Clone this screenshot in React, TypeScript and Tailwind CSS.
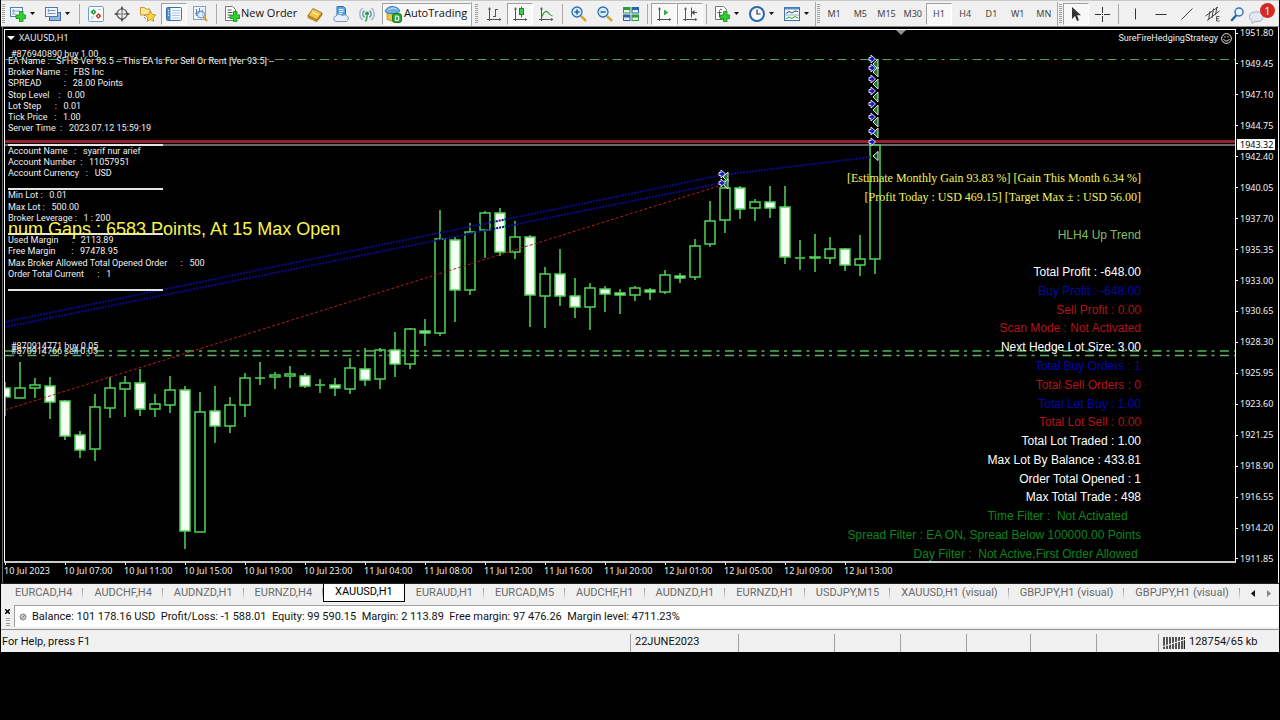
import { useState, type ReactNode } from "react";
import clsx from "clsx";

const TOOLBAR_FONT = "font-['Open_Sans','Noto_Sans',sans-serif]";
const PANEL_FONT = "font-['Roboto','Noto_Sans',sans-serif]";
const AXIS_FONT = "font-['Noto_Sans','Open_Sans',sans-serif]";

// high, body top, body bottom, low (chart px), filled
type Candle = [number, number, number, number, boolean];

const CANDLES: Candle[] = [
    [382, 388, 397, 416, true],
    [362, 388, 398, 398, false],
    [378, 385, 388, 398, false],
    [377, 386, 402, 419, true],
    [400, 401, 436, 440, true],
    [431, 435, 450, 458, true],
    [394, 407, 449, 461, false],
    [377, 388, 408, 418, false],
    [376, 383, 389, 417, false],
    [369, 383, 409, 416, true],
    [394, 404, 409, 417, false],
    [376, 390, 405, 413, false],
    [386, 390, 531, 549, true],
    [392, 412, 532, 532, false],
    [386, 411, 426, 443, true],
    [397, 405, 426, 433, false],
    [373, 378, 405, 417, false],
    [362, 378, 378, 385, false],
    [372, 375, 377, 389, false],
    [366, 374, 376, 388, false],
    [373, 376, 386, 388, true],
    [379, 385, 385, 393, false],
    [378, 385, 388, 396, true],
    [358, 368, 389, 394, false],
    [348, 369, 380, 386, true],
    [348, 350, 379, 389, false],
    [332, 350, 364, 377, true],
    [328, 329, 364, 369, false],
    [319, 331, 333, 346, true],
    [210, 239, 333, 336, false],
    [237, 240, 290, 322, true],
    [223, 232, 290, 295, false],
    [211, 213, 230, 258, false],
    [208, 213, 252, 256, true],
    [221, 237, 252, 259, false],
    [235, 237, 295, 327, true],
    [267, 274, 296, 328, false],
    [249, 274, 296, 306, true],
    [278, 296, 307, 318, true],
    [283, 288, 307, 330, false],
    [286, 289, 294, 312, true],
    [289, 293, 295, 314, true],
    [286, 288, 295, 301, false],
    [288, 290, 292, 300, true],
    [270, 275, 292, 294, false],
    [273, 276, 278, 283, true],
    [239, 246, 277, 280, false],
    [201, 221, 244, 247, false],
    [180, 188, 220, 233, false],
    [186, 188, 209, 219, true],
    [199, 202, 208, 221, false],
    [186, 202, 208, 218, true],
    [186, 207, 257, 264, true],
    [240, 258, 258, 270, false],
    [234, 257, 258, 272, true],
    [237, 249, 258, 264, false],
    [248, 249, 265, 271, true],
    [235, 259, 265, 276, false],
    [145, 145, 259, 274, false],
];

const ENTRIES = [
    [867, 59], [867, 68], [867, 79], [867, 91], [867, 104], [867, 117], [867, 131], [867, 142],
    [717, 174], [717, 183],
];
const EXITS = [
    [872, 64], [872, 72], [872, 84], [872, 97], [872, 110], [872, 122], [872, 133],
    [722, 177], [722, 184],
];

const PRICES = [
    "1951.80", "1949.45", "1947.10", "1944.75", "1942.40", "1940.05", "1937.70", "1935.35", "1933.00",
    "1930.65", "1928.30", "1925.95", "1923.60", "1921.25", "1918.90", "1916.55", "1914.20", "1911.85",
];

const TIMES = [
    "10 Jul 2023", "10 Jul 07:00", "10 Jul 11:00", "10 Jul 15:00", "10 Jul 19:00", "10 Jul 23:00",
    "11 Jul 04:00", "11 Jul 08:00", "11 Jul 12:00", "11 Jul 16:00", "11 Jul 20:00",
    "12 Jul 01:00", "12 Jul 05:00", "12 Jul 09:00", "12 Jul 13:00",
];

// null draws a divider
const ACCOUNT_INFO: (string | null)[] = [
    "EA Name :   SFHS Ver 93.5 -- This EA Is For Sell Or Rent [Ver 93.5] --",
    "Broker Name  :   FBS Inc",
    "SPREAD          :   28.00 Points",
    "Stop Level    :   0.00",
    "Lot Step      :   0.01",
    "Tick Price   :   1.00",
    "Server Time  :   2023.07.12 15:59:19",
    null,
    "Account Name   :   syarif nur arief",
    "Account Number  :   11057951",
    "Account Currency   :   USD",
    null,
    "Min Lot :   0.01",
    "Max Lot :   500.00",
    "Broker Leverage :   1 : 200",
    null,
    "Used Margin      :   2113.89",
    "Free Margin       :   97478.95",
    "Max Broker Allowed Total Opened Order      :   500",
    "Order Total Current      :   1",
    null,
];

const SERIF = "font-['Liberation_Serif',serif] text-[#f4f45c]";

const STRATEGY_INFO: { text: string; cls: string }[] = [
    { text: "[Estimate Monthly Gain 93.83 %] [Gain This Month 6.34 %]", cls: SERIF },
    { text: "[Profit Today : USD 469.15] [Target Max ± : USD 56.00]", cls: SERIF },
    { text: "", cls: "" },
    { text: "HLH4 Up Trend", cls: "text-[#83bd5e]" },
    { text: "", cls: "" },
    { text: "Total Profit : -648.00", cls: "text-white" },
    { text: "Buy Profit : -648.00", cls: "text-[#0404b4]" },
    { text: "Sell Profit : 0.00", cls: "text-[#b8101c]" },
    { text: "Scan Mode : Not Activated", cls: "text-[#b8101c]" },
    { text: "Next Hedge Lot Size: 3.00", cls: "text-white" },
    { text: "Total Buy Orders : 1", cls: "text-[#0404b4]" },
    { text: "Total Sell Orders : 0", cls: "text-[#b8101c]" },
    { text: "Total Lot Buy : 1.00", cls: "text-[#0404b4]" },
    { text: "Total Lot Sell : 0.00", cls: "text-[#b8101c]" },
    { text: "Total Lot Traded : 1.00", cls: "text-white" },
    { text: "Max Lot By Balance : 433.81", cls: "text-white" },
    { text: "Order Total Opened : 1", cls: "text-white" },
    { text: "Max Total Trade : 498", cls: "text-white" },
    { text: "Time Filter :  Not Activated    ", cls: "text-[#0c861a]" },
    { text: "Spread Filter : EA ON, Spread Below 100000.00 Points", cls: "text-[#0c861a]" },
    { text: "Day Filter :  Not Active,First Order Allowed ", cls: "text-[#0c861a]" },
];

const TABS = [
    "EURCAD,H4", "AUDCHF,H4", "AUDNZD,H1", "EURNZD,H4", "XAUUSD,H1", "EURAUD,H1", "EURCAD,M5",
    "AUDCHF,H1", "AUDNZD,H1", "EURNZD,H1", "USDJPY,M15", "XAUUSD,H1 (visual)",
    "GBPJPY,H1 (visual)", "GBPJPY,H1 (visual)",
];

const PERIODS = ["M1", "M5", "M15", "M30", "H1", "H4", "D1", "W1", "MN"];

/* ---------- toolbar icons ---------- */

function Icon({ children }: { children: ReactNode }) {
    return (
        <svg viewBox="0 0 16 16" className="h-4 w-4 shrink-0" fill="none" aria-hidden="true">
            {children}
        </svg>
    );
}

const GreenPlus = () => (
    <path d="M9.500 5.500h3.500v3.500H16v3.500h-3v3.200h-3.500v-3.200H6V9h3.500z" fill="#2fd02f" stroke="#138a17" strokeWidth=".8" />
);

const NewChartIcon = () => (
    <Icon>
        <rect x=".5" y="1.500" width="12" height="9" fill="#eef5fc" stroke="#5580b0" />
        <path d="M2 5h8M2 8h4M3.500 3v4" stroke="#7fa3cc" />
        <GreenPlus />
    </Icon>
);

const ProfilesIcon = () => (
    <Icon>
        <rect x="4.500" y="6.500" width="11" height="8" fill="#8fb4dd" stroke="#3f6ea8" />
        <rect x=".5" y="1.500" width="12" height="9" fill="#eef5fc" stroke="#4a78b0" />
        <path d="M2.500 4.500h8M2.500 7.500h8M3.500 3v3" stroke="#6f98c8" />
    </Icon>
);

const MarketWatchIcon = () => (
    <Icon>
        <rect x=".5" y=".5" width="15" height="15" rx="1" fill="#fbfdff" stroke="#6d9cc9" />
        <path d="m5.500 3 3 3-3 3-3-3z" fill="#1f9a38" />
        <path d="m10.500 7 3 3-3 3-3-3z" fill="#cc3322" />
        <path d="M5.500 5v2M10.500 9v2" stroke="#fff" />
        <path d="M3 11h3M3 13h2M10 3.500h3" stroke="#a9c2dc" />
    </Icon>
);

const NavigatorIcon = () => (
    <Icon>
        <circle cx="8" cy="8" r="5" stroke="#555" strokeWidth="1.200" />
        <path d="M8 .5v15M.5 8h15" stroke="#555" />
        <path d="M8 .5 6.500 3h3zM8 15.500 6.500 13h3zM.5 8 3 6.500v3zM15.500 8 13 6.500v3z" fill="#444" />
        <circle cx="8" cy="8" r="2" fill="#f4f4f4" />
        <path d="M8 6v4M6 8h4" stroke="#777" />
    </Icon>
);

const FavoritesIcon = () => (
    <Icon>
        <path d="M.5 1.500h4l1 1.500H10v6H.5z" fill="#fbe59a" stroke="#c79a2e" />
        <path d="M4.500 9v3.500H7" stroke="#888" strokeDasharray="1 1" />
        <path d="m10.500 5 1.700 3.400 3.600.5-2.600 2.600.6 3.800-3.300-1.800-3.300 1.800.6-3.800-2.600-2.600 3.600-.5z" fill="#ffd43a" stroke="#b9861a" strokeWidth=".8" />
    </Icon>
);

const DataWindowIcon = () => (
    <Icon>
        <rect x=".5" y="1.500" width="15" height="13" rx="1" fill="#f7fbff" stroke="#3d6fa8" />
        <rect x="1" y="2" width="3.500" height="12" fill="#4f8fd0" />
        <path d="M6 4.500h8M6 7h8M6 9.500h8M6 12h8" stroke="#aac6e2" />
        <path d="M2 4.500h1M2 7h1M2 9.500h1" stroke="#fff" />
    </Icon>
);

const TesterIcon = () => (
    <Icon>
        <rect x="1.500" y=".5" width="12" height="13" fill="#eef5fc" stroke="#7ea4cc" />
        <path d="M4.500 3v7M7.500 2v6M10.500 4v6M3 8l4-3 4 2" stroke="#5b86b5" />
        <circle cx="9" cy="8.500" r="3.500" fill="#d9ebfb" fillOpacity=".7" stroke="#6a8fb8" />
        <path d="m11.500 11 3.500 4" stroke="#d9a02c" strokeWidth="2" />
    </Icon>
);

const NewOrderIcon = () => (
    <Icon>
        <path d="M1.500.5h7l3 3v11h-10z" fill="#fff" stroke="#777" />
        <path d="M3.500 4h4M3.500 6.500h5M3.500 9h3M3.500 11.500h2" stroke="#555" />
        <GreenPlus />
    </Icon>
);

const MetaEditorIcon = () => (
    <Icon>
        <path d="M1 9.500 6 2.500l9 4.500-5 7z" fill="#f3c64a" stroke="#a87616" />
        <path d="M1 9.500v2.200l8.800 4L15 9V7l-5 7z" fill="#d79a2a" stroke="#9a6a12" strokeWidth=".7" />
        <path d="m5 6 6 3" stroke="#fbe7a4" strokeWidth="1.500" />
    </Icon>
);

const CloudIcon = () => (
    <Icon>
        <path d="M4 .5h6.500l2 2V10H4z" fill="#58a6e8" stroke="#2b6fb5" />
        <path d="M6 3.500h4.500M6 5.500h4.500M6 7.500h3" stroke="#fff" />
        <path d="M3 15.500a2.800 2.800 0 0 1 0-5.500 3.500 3 0 0 1 6-.5 3.500 3 0 0 1 4.500 6z" fill="#e8eef6" stroke="#8496b0" />
    </Icon>
);

const SignalsIcon = () => (
    <Icon>
        <path d="M3.800 2a7.500 7.500 0 0 0 0 12M12.200 2a7.500 7.500 0 0 1 0 12" stroke="#a8bac8" strokeWidth="1.500" />
        <path d="M5.500 4.500a4.500 4.500 0 0 0 0 7M10.500 4.500a4.500 4.500 0 0 1 0 7" stroke="#5e9aa5" strokeWidth="1.500" />
        <circle cx="8" cy="7.500" r="2" fill="#2c9c55" />
        <path d="M8 9.500c0 3-.5 4.500-1.500 6" stroke="#3fae5e" strokeWidth="1.800" />
    </Icon>
);

const AutoTradingIcon = () => (
    <svg viewBox="0 0 18 18" className="h-[18px] w-[18px] shrink-0" fill="none" aria-hidden="true">
        <path d="M3 8v6.500l6 2V9z" fill="#f1c23e" stroke="#a97f17" strokeWidth=".7" />
        <path d="M15 8v4l-6 4.500V9z" fill="#fadf7c" />
        <path d="M1 6.500C2 3 6 1 9.500 1.500c3 .5 5.500 2 6.500 4.500-3 3-11 4-15 .5z" fill="#6cb0e4" stroke="#2c6ca8" strokeWidth=".8" />
        <path d="M4.500 5c2-2 6-2.500 8-1" stroke="#cfe7f9" />
        <rect x="8.500" y="8.500" width="9" height="9" rx="2.500" fill="#27a835" stroke="#16801f" />
        <path d="M11.500 11v4.500h1.500c2.400 0 2.400-4.500 0-4.500z" stroke="#fff" strokeWidth="1.200" />
    </svg>
);

const Axes = () => (
    <>
        <path d="M3.500 2v13M1 13.500h13.500" stroke="#555" />
        <path d="m3.500 1-1.500 2.500h3zM15.500 13.500 13 12v3z" fill="#555" />
    </>
);

const BarsIcon = () => (
    <Icon>
        <Axes />
        <path d="M9.500 3v8M9.500 3.500H12M7 10.500h2.500" stroke="#555" />
    </Icon>
);

const CandlesIcon = () => (
    <Icon>
        <Axes />
        <path d="M9.500.5v11" stroke="#1a8a24" />
        <rect x="7.500" y="2.500" width="4" height="6" fill="#37d046" stroke="#1a8a24" />
    </Icon>
);

const LineIcon = () => (
    <Icon>
        <Axes />
        <path d="M4 10.500C6 5 8.500 4.500 10 6.500c1.200 1.700 2 3 4.500 3.500" stroke="#2c9a3a" strokeWidth="1.200" />
    </Icon>
);

const ZoomIcon = ({ plus }: { plus?: boolean }) => (
    <Icon>
        <path d="m10 10 5 5" stroke="#d9a632" strokeWidth="2.500" />
        <circle cx="6" cy="6" r="5" fill="#d6ebfb" stroke="#2f6fb8" strokeWidth="1.300" />
        <path d="M3.500 6h5" stroke="#2460a8" strokeWidth="1.500" />
        {plus && <path d="M6 3.500v5" stroke="#2460a8" strokeWidth="1.500" />}
    </Icon>
);

const TilesIcon = () => (
    <Icon>
        <rect x="0" y="1" width="7.500" height="6.500" fill="#2f9c3a" />
        <rect x="8.500" y="1" width="7.500" height="6.500" fill="#2b62b4" />
        <rect x="0" y="8.500" width="7.500" height="6.500" fill="#2b62b4" />
        <rect x="8.500" y="8.500" width="7.500" height="6.500" fill="#2f9c3a" />
        <path d="M1 4h5.500v2.500H1zM9.500 4H15v2.500H9.500zM1 11.500h5.500V14H1zM9.500 11.500H15V14H9.500z" fill="#eaf4ee" />
    </Icon>
);

const AutoScrollIcon = () => (
    <Icon>
        <Axes />
        <path d="m8 3.500 4.500 3L8 9.500z" fill="#34b043" />
    </Icon>
);

const ShiftIcon = () => (
    <Icon>
        <Axes />
        <path d="M9.500 1.500v10M15 6.500h-4" stroke="#555" />
        <path d="m9.500 6.500 3-2.500v5z" fill="#444" />
    </Icon>
);

const IndicatorsIcon = () => (
    <Icon>
        <path d="M1.500.5h8l3 3v10h-11z" fill="#fff" stroke="#777" />
        <path d="M8 3.500c-2-.8-2.500.5-2.500 2V11M3.500 6.500h4" stroke="#555" />
        <GreenPlus />
    </Icon>
);

const ClockIcon = () => (
    <Icon>
        <circle cx="8" cy="8" r="7" fill="#f4faff" stroke="#2b66ad" strokeWidth="2" />
        <path d="M8 3.500V8h3.500" stroke="#333" strokeWidth="1.200" />
    </Icon>
);

const TemplatesIcon = () => (
    <Icon>
        <rect x=".5" y="1.500" width="15" height="13" fill="#f7fbff" stroke="#3d6fa8" />
        <path d="M1 2.500h14" stroke="#4f8fd0" strokeWidth="2" />
        <path d="m2 7.500 3-2 3 1.500 3-2 3 .5" stroke="#444" />
        <path d="M1 9h14" stroke="#8fb0d2" />
        <path d="m2 13 3-2 3 1.500 3-2 3 1.500" stroke="#2c9a3a" />
    </Icon>
);

const CursorIcon = () => (
    <Icon>
        <path d="M4 1v12l3-3 2 5 2-.8-2-4.900h4z" fill="#333" />
    </Icon>
);

const CrosshairIcon = () => (
    <Icon>
        <path d="M8.500 1v6M8.500 10v6M1 8.500h6M10 8.500h6" stroke="#333" />
        <path d="M8 8.500h1" stroke="#333" />
    </Icon>
);

const VLineIcon = () => <Icon><path d="M8.500 2.500v11" stroke="#333" /></Icon>;
const HLineIcon = () => <Icon><path d="M2.500 8.500h11" stroke="#333" /></Icon>;
const TrendIcon = () => <Icon><path d="m2.500 13.500 11-11" stroke="#444" /></Icon>;

const ChannelIcon = () => (
    <Icon>
        <path d="M.5 10 13 1M2 14.500 14.500 5" stroke="#444" />
        <path d="m3.500 14 1.500-9M7 12l1.500-9.500M10.500 9 12 1" stroke="#444" />
        <path d="M14.500 10.500h-3v4.500h3M11.500 12.700h2.500" stroke="#555" />
    </Icon>
);

const SearchIcon = () => (
    <Icon>
        <path d="M7.500 9 3 14" stroke="#2c5fae" strokeWidth="2.500" strokeLinecap="round" />
        <circle cx="10" cy="6" r="4" fill="#eaf4fd" stroke="#3b70bb" strokeWidth="1.500" />
    </Icon>
);

/* ---------- toolbar parts ---------- */

const RAISED = "border border-transparent";
const PRESSED = "border border-t-[#a0a0a0] border-l-[#a0a0a0] border-r-white border-b-white bg-[#f8f8f8]";

function ToolButton({ label, pressed, children }: { label: string; pressed?: boolean; children: ReactNode }) {
    return (
        <button
            aria-label={label}
            className={clsx("flex h-[22px] w-[26px] shrink-0 items-center justify-center", pressed ? PRESSED : RAISED)}
        >
            {children}
        </button>
    );
}

function MenuButton({ label, children }: { label: string; children: ReactNode }) {
    return (
        <button aria-label={label} className="flex h-[22px] w-[35px] shrink-0 items-center pl-1">
            {children}
            <svg viewBox="0 0 5 3" className="ml-1 h-[3px] w-[5px]" aria-hidden="true">
                <path d="M0 0h5L2.500 3z" fill="#111" />
            </svg>
        </button>
    );
}

const Separator = () => <div className="mx-[3px] h-5 w-px shrink-0 bg-[#a8a8a8]" />;

const Grip = () => (
    <div className="mx-px flex h-5 w-[3px] shrink-0 flex-col justify-between">
        {Array.from({ length: 10 }, (_, i) => (
            <span key={i} className="h-px bg-[#a0a0a0]" />
        ))}
    </div>
);

function Toolbar() {
    const [period, setPeriod] = useState("H1");

    return (
        <header className={clsx("flex h-[27px] items-center overflow-hidden border-t border-b border-t-[#c8c8c8] border-b-[#8c8c8c] bg-[#f0f0f0]", TOOLBAR_FONT)}>
            <Grip />
            <MenuButton label="New chart"><NewChartIcon /></MenuButton>
            <MenuButton label="Profiles"><ProfilesIcon /></MenuButton>
            <Separator />
            <ToolButton label="Market Watch"><MarketWatchIcon /></ToolButton>
            <ToolButton label="Data Window"><NavigatorIcon /></ToolButton>
            <ToolButton label="Navigator"><FavoritesIcon /></ToolButton>
            <ToolButton label="Terminal" pressed><DataWindowIcon /></ToolButton>
            <ToolButton label="Strategy Tester"><TesterIcon /></ToolButton>
            <Separator />
            <button className="flex h-[22px] w-[82px] shrink-0 items-center gap-px pl-1 text-[11px] whitespace-nowrap text-[#111]">
                <NewOrderIcon />
                New Order
            </button>
            <ToolButton label="MetaEditor"><MetaEditorIcon /></ToolButton>
            <ToolButton label="Virtual hosting"><CloudIcon /></ToolButton>
            <ToolButton label="Signals"><SignalsIcon /></ToolButton>
            <button className={clsx("ml-[2px] flex h-[22px] w-[89px] shrink-0 items-center gap-[2px] pl-px text-[11px] whitespace-nowrap text-[#111]", PRESSED)}>
                <AutoTradingIcon />
                AutoTrading
            </button>
            <div className="h-6 w-px shrink-0 bg-[#a8a8a8]" />
            <div className="mx-[2px]"><Grip /></div>
            <ToolButton label="Bar chart"><BarsIcon /></ToolButton>
            <ToolButton label="Candlesticks" pressed><CandlesIcon /></ToolButton>
            <ToolButton label="Line chart"><LineIcon /></ToolButton>
            <Separator />
            <ToolButton label="Zoom in"><ZoomIcon plus /></ToolButton>
            <ToolButton label="Zoom out"><ZoomIcon /></ToolButton>
            <ToolButton label="Tile windows"><TilesIcon /></ToolButton>
            <Separator />
            <ToolButton label="Auto scroll" pressed><AutoScrollIcon /></ToolButton>
            <ToolButton label="Chart shift" pressed><ShiftIcon /></ToolButton>
            <Separator />
            <MenuButton label="Indicators"><IndicatorsIcon /></MenuButton>
            <MenuButton label="Periods"><ClockIcon /></MenuButton>
            <MenuButton label="Templates"><TemplatesIcon /></MenuButton>
            <div className="h-6 w-px shrink-0 bg-[#a8a8a8]" />
            <Grip />
            <div className={clsx("grid w-[236px] shrink-0 grid-cols-9 text-[9px] text-[#444]", AXIS_FONT)}>
                {PERIODS.map((p) => (
                    <button
                        key={p}
                        onClick={() => setPeriod(p)}
                        className={clsx("flex h-[22px] items-center justify-center", p === period ? PRESSED : RAISED)}
                    >
                        {p}
                    </button>
                ))}
            </div>
            <div className="h-6 w-px shrink-0 bg-[#a8a8a8]" />
            <Grip />
            <ToolButton label="Cursor" pressed><CursorIcon /></ToolButton>
            <ToolButton label="Crosshair"><CrosshairIcon /></ToolButton>
            <Separator />
            <ToolButton label="Vertical line"><VLineIcon /></ToolButton>
            <ToolButton label="Horizontal line"><HLineIcon /></ToolButton>
            <ToolButton label="Trendline"><TrendIcon /></ToolButton>
            <ToolButton label="Equidistant channel"><ChannelIcon /></ToolButton>
            <div className="ml-auto flex shrink-0 items-center">
                <button aria-label="Search" className="flex h-[22px] w-[22px] items-center justify-center">
                    <SearchIcon />
                </button>
                <button aria-label="Notifications" className="relative flex h-[22px] w-8 items-center pl-px">
                    <svg viewBox="0 0 16 16" className="mt-1 h-4 w-4" fill="none" aria-hidden="true">
                        <path d="M6 4C2.500 4 .5 6 .5 8.500S2 12.500 3 13v2.500L6 13.500h3c3 0 5-2 5-4.500S11 4 9 4z" fill="#e6e8f0" stroke="#a9adbd" />
                    </svg>
                    <span className="absolute top-0 right-[5px] flex h-[15px] w-[15px] items-center justify-center rounded-full bg-[#d42a26] text-[11px] leading-none text-white">
                        1
                    </span>
                </button>
            </div>
        </header>
    );
}

/* ---------- chart ---------- */

function CandleShape({ x, candle }: { x: number; candle: Candle }) {
    const [high, top, bottom, low, filled] = candle;
    return (
        <g stroke="#4fd655" strokeWidth="1.500">
            <path d={`M${x} ${high}V${top}M${x} ${bottom}V${low}`} />
            {top === bottom ? (
                <path d={`M${x - 5} ${top}h10`} />
            ) : (
                <rect x={x - 5} y={top} width="10" height={bottom - top} fill={filled ? "#f2fff2" : "none"} />
            )}
        </g>
    );
}

function PriceChart() {
    return (
        <svg className="absolute inset-0 h-full w-full" fill="none" aria-label="XAUUSD H1 candlesticks">
            <g transform="translate(0 -30)">
                <line x1="0" x2="100%" y1="59.500" y2="59.500" stroke="#4aa653" strokeDasharray="9 5 3 5.500" />
                <line x1="0" x2="100%" y1="141.500" y2="141.500" stroke="#96202e" strokeWidth="3" />
                <line x1="0" x2="100%" y1="145" y2="145" stroke="#8c8c94" strokeWidth="1.500" />
                <g stroke="#58b45e" strokeWidth="1.500" strokeDasharray="9 5 3 5.500">
                    <line x1="0" x2="100%" y1="351" y2="351" />
                    <line x1="0" x2="100%" y1="355.500" y2="355.500" />
                </g>

                {CANDLES.map((c, i) => (
                    <CandleShape key={i} x={i * 15} candle={c} />
                ))}

                <g stroke="#0a0a86" strokeWidth="2" strokeDasharray="2 1">
                    <path d="M0 322 717 175 867 157" />
                    <path d="M0 327 717 183" />
                </g>
                <path d="M0 410 717 185" stroke="#b41c20" strokeDasharray="3 2" />

                {EXITS.map(([x, y]) => (
                    <path key={`${x}-${y}`} d={`M${x + 1} ${y - 5}v10l-5-5z`} fill="#1c7a2c" stroke="#cfe8cf" />
                ))}
                <path d="M873 151.500v9l-5-4.500z" fill="#0a4a14" stroke="#e8ffe8" />
                {ENTRIES.map(([x, y]) => (
                    <path
                        key={`${x}-${y}`}
                        d={`M${x - 1} ${y - 4}l4.500 4-4.500 4v-2.500h-2v-3h2z`}
                        fill="#1c1cc0"
                        stroke="#d8d8ff"
                    />
                ))}
                <path d="M891 30h10l-5 5z" fill="#909090" />
            </g>
        </svg>
    );
}

function ChartOverlays() {
    return (
        <>
            <div className="absolute top-0 left-[2px] flex h-[15px] items-center gap-1">
                <svg viewBox="0 0 8 4" className="h-1 w-2" aria-hidden="true"><path d="M0 0h8L4 4z" fill="#fff" /></svg>
                XAUUSD,H1
            </div>
            <div className={clsx("absolute top-[2px] right-[3px] flex h-[13px] items-center gap-[3px]", PANEL_FONT)}>
                SureFireHedgingStrategy
                <svg viewBox="0 0 12 12" className="h-[11px] w-[11px]" fill="none" stroke="#fff" aria-hidden="true">
                    <circle cx="6" cy="6" r="5.300" />
                    <path d="M3 6.500c.5 3 5.500 3 6 0M4.300 3.500v1.500M7.700 3.500v1.500" />
                </svg>
            </div>
            <div className={clsx("absolute top-[18px] left-[6px] leading-3", PANEL_FONT)}>#876940890 buy 1.00</div>
            <div className={clsx("absolute top-[310px] left-[6px] leading-3", PANEL_FONT)}>#870914771 buy 0.05</div>
            <div className={clsx("absolute top-[315px] left-[6px] leading-3", PANEL_FONT)}>#870914766 sell 0.05</div>

            <div className={clsx("absolute top-[26px] left-[3px] grid h-[235px] auto-rows-fr leading-none", PANEL_FONT)}>
                {ACCOUNT_INFO.map((line, i) =>
                    line === null ? (
                        <div key={i} className="w-[155px] self-end border-b-2 border-[#e4e4e4]" />
                    ) : (
                        <div key={i} className="self-center whitespace-pre">{line}</div>
                    )
                )}
            </div>

            <div className="absolute top-[187px] left-[3px] font-['Liberation_Sans',sans-serif] text-[18px] leading-6 whitespace-nowrap text-[#f6f64a]">
                num Gaps : 6583 Points, At 15 Max Open
            </div>

            <div className="absolute top-[139px] right-[94px] grid h-[394px] auto-rows-fr text-right font-['Liberation_Sans',sans-serif] text-[12px] leading-none">
                {STRATEGY_INFO.map((row, i) => (
                    <div key={i} className={clsx("self-center whitespace-pre", row.cls)}>{row.text}</div>
                ))}
            </div>
        </>
    );
}

function ChartWindow() {
    return (
        <main className={clsx("ml-px border-x border-l-[#6e6e6e] border-r-white bg-black pt-[2px] pl-px text-[9px] whitespace-nowrap text-[#f0f0f0]", AXIS_FONT)}>
            <div className="flex">
                <div className="relative h-[534px] min-w-0 flex-1 overflow-hidden border border-b-2 border-white border-b-[#c8c8c8]">
                    <PriceChart />
                    <ChartOverlays />
                </div>
                <div className="relative flex w-[42px] shrink-0 flex-col justify-between leading-2">
                    {PRICES.map((p) => (
                        <div key={p} className="flex items-center gap-[2px]">
                            <span className="h-px w-[2px] bg-white" />
                            {p}
                        </div>
                    ))}
                    <div className="absolute top-[110px] left-px w-[38px] bg-white pl-[3px] leading-[11px] text-black">1943.32</div>
                </div>
            </div>
            <div className="flex h-5 overflow-hidden">
                {TIMES.map((t) => (
                    <div key={t} className="w-[60px] shrink-0">
                        <div className="ml-px h-[2px] w-px bg-white" />
                        <div className="leading-3">{t}</div>
                    </div>
                ))}
            </div>
        </main>
    );
}

/* ---------- bottom panels ---------- */

function ChartTabs() {
    const [active, setActive] = useState(4);

    return (
        <nav className="flex h-5 items-start overflow-hidden border-t border-[#202020] bg-[#f0f0f0] pl-[3px] text-[11px] text-[#6a6a6a]">
            {TABS.map((tab, i) => (
                <button
                    key={i}
                    onClick={() => setActive(i)}
                    className={clsx(
                        "flex h-[18px] shrink-0 items-center px-[11px] whitespace-nowrap",
                        i === active
                            ? "border-x border-b border-black bg-white text-black"
                            : "bg-linear-to-b from-transparent from-20% via-[#909090] via-20% to-transparent to-90% bg-[length:1px_100%] bg-right bg-no-repeat"
                    )}
                >
                    {tab}
                </button>
            ))}
            <div className="ml-auto flex h-[18px] shrink-0 items-center gap-3 pr-2">
                <button aria-label="Scroll tabs left">
                    <svg viewBox="0 0 4 7" className="h-[7px] w-1"><path d="M4 0v7L0 3.500z" fill="#111" /></svg>
                </button>
                <button aria-label="Scroll tabs right">
                    <svg viewBox="0 0 4 7" className="h-[7px] w-1"><path d="M0 0v7l4-3.500z" fill="#888" /></svg>
                </button>
            </div>
        </nav>
    );
}

function AccountBar() {
    return (
        <section className="flex h-[26px] bg-[#f0f0f0] py-[2px] text-[11px] text-[#111]">
            <div className="flex w-[13px] shrink-0 flex-col items-center gap-1 pt-1">
                <button aria-label="Close panel" className="flex">
                    <svg viewBox="0 0 5 5" className="h-[5px] w-[5px]"><path d="m0 0 5 5M5 0 0 5" stroke="#000" strokeWidth="1.500" /></svg>
                </button>
                <div className="flex h-2 w-1 flex-col justify-between">
                    <span className="h-px bg-[#a0a0a0]" />
                    <span className="h-px bg-[#a0a0a0]" />
                    <span className="h-px bg-[#a0a0a0]" />
                    <span className="h-px bg-[#a0a0a0]" />
                </div>
            </div>
            <div className="flex min-w-0 flex-1 items-center gap-[5px] overflow-hidden border-t border-l border-[#a0a0a0] bg-white pt-px pl-1 whitespace-pre">
                <svg viewBox="0 0 8 8" className="h-2 w-2 shrink-0" aria-hidden="true">
                    <circle cx="4" cy="4" r="3" fill="#ccc" stroke="#888" />
                    <path d="M2.500 5.500 5.500 2.500" stroke="#777" />
                </svg>
                {"Balance: 101 178.16 USD  Profit/Loss: -1 588.01  Equity: 99 590.15  Margin: 2 113.89  Free margin: 97 476.26  Margin level: 4711.23%"}
            </div>
        </section>
    );
}

function StatusBar() {
    const cell = "h-[18px] shrink-0 border-l border-[#a0a0a0]";
    return (
        <footer className="flex h-[23px] items-center border-t border-[#909090] bg-[#f0f0f0] pt-[3px] text-[11px] whitespace-nowrap text-[#111]">
            <div className="min-w-0 flex-1 pl-px">For Help, press F1</div>
            <div className={clsx(cell, "flex w-[108px] items-center pl-1")}>22JUNE2023</div>
            <div className={clsx(cell, "w-24")} />
            <div className={clsx(cell, "w-[66px]")} />
            <div className={clsx(cell, "w-[66px]")} />
            <div className={clsx(cell, "w-16")} />
            <div className={clsx(cell, "w-[66px]")} />
            <div className={clsx(cell, "w-[62px]")} />
            <div className={clsx(cell, "flex w-[121px] items-center gap-1 pl-1")}>
                <svg viewBox="0 0 22 12" className="h-3 w-[22px]" aria-hidden="true">
                    <path d="M1 0v12M4 0v12M7 0v12M10 0v12M13 0v12M16 0v12M19 0v12M21.500 0v12" stroke="#222" strokeWidth="1.500" />
                    <path d="M0 9.500 22 2.500" stroke="#f0f0f0" />
                </svg>
                128754/65 kb
            </div>
        </footer>
    );
}

export default function App() {
    return (
        <div className={clsx("min-h-screen bg-black", PANEL_FONT)}>
            <div className="mx-px">
                <Toolbar />
                <ChartWindow />
                <ChartTabs />
                <AccountBar />
                <StatusBar />
            </div>
        </div>
    );
}
